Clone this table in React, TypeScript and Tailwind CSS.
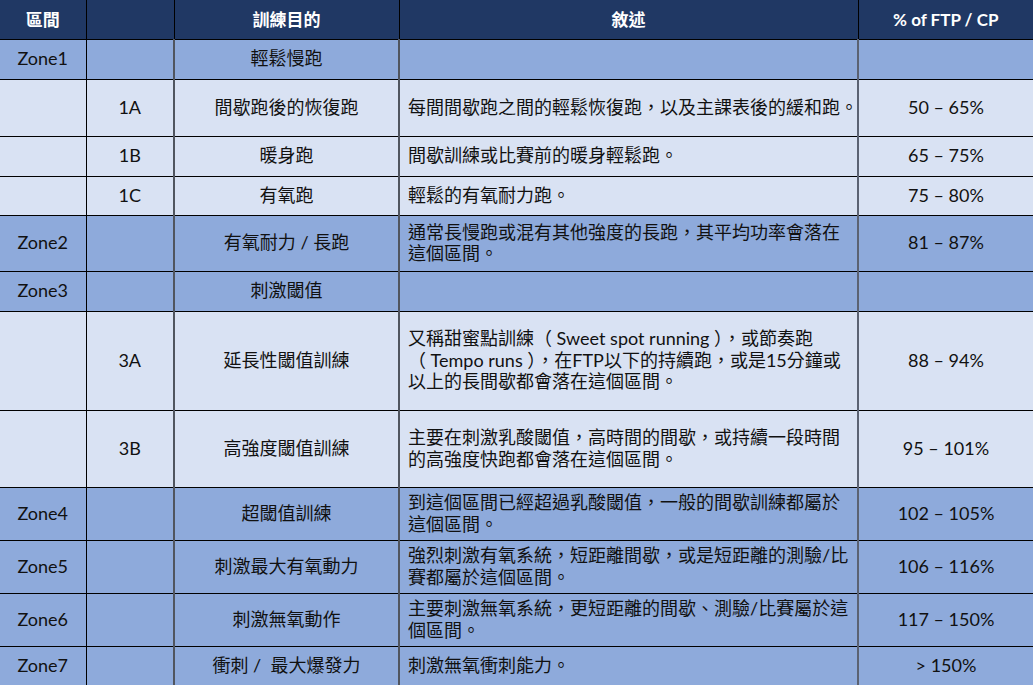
const font = { fontFamily: '"Lato", "Noto Sans CJK TC", sans-serif' };

type Row = {
  zone?: string;
  sub?: string;
  goal: string;
  desc: string[];
  pct: string;
  main: boolean;
  h: string;
};

const rows: Row[] = [
  { zone: "Zone1", goal: "輕鬆慢跑", desc: [], pct: "", main: true, h: "h-[40px]" },
  { sub: "1A", goal: "間歇跑後的恢復跑", desc: ["每間間歇跑之間的輕鬆恢復跑，以及主課表後的緩和跑。"], pct: "50 – 65%", main: false, h: "h-[57px]" },
  { sub: "1B", goal: "暖身跑", desc: ["間歇訓練或比賽前的暖身輕鬆跑。"], pct: "65 – 75%", main: false, h: "h-[40px]" },
  { sub: "1C", goal: "有氧跑", desc: ["輕鬆的有氧耐力跑。"], pct: "75 – 80%", main: false, h: "h-[39px]" },
  { zone: "Zone2", goal: "有氧耐力 / 長跑", desc: ["通常長慢跑或混有其他強度的長跑，其平均功率會落在", "這個區間。"], pct: "81 – 87%", main: true, h: "h-[56px]" },
  { zone: "Zone3", goal: "刺激閾值", desc: [], pct: "", main: true, h: "h-[40px]" },
  { sub: "3A", goal: "延長性閾值訓練", desc: ["又稱甜蜜點訓練（ Sweet spot running ），或節奏跑", "（ Tempo runs ），在FTP以下的持續跑，或是15分鐘或", "以上的長間歇都會落在這個區間。"], pct: "88 – 94%", main: false, h: "h-[99px]" },
  { sub: "3B", goal: "高強度閾值訓練", desc: ["主要在刺激乳酸閾值，高時間的間歇，或持續一段時間", "的高強度快跑都會落在這個區間。"], pct: "95 – 101%", main: false, h: "h-[77px]" },
  { zone: "Zone4", goal: "超閾值訓練", desc: ["到這個區間已經超過乳酸閾值，一般的間歇訓練都屬於", "這個區間。"], pct: "102 – 105%", main: true, h: "h-[53px]" },
  { zone: "Zone5", goal: "刺激最大有氧動力", desc: ["強烈刺激有氧系統，短距離間歇，或是短距離的測驗/比", "賽都屬於這個區間。"], pct: "106 – 116%", main: true, h: "h-[53px]" },
  { zone: "Zone6", goal: "刺激無氧動作", desc: ["主要刺激無氧系統，更短距離的間歇、測驗/比賽屬於這", "個區間。"], pct: "117 – 150%", main: true, h: "h-[53px]" },
  { zone: "Zone7", goal: "衝刺 /\u00a0\u00a0最大爆發力", desc: ["刺激無氧衝刺能力。"], pct: "> 150%", main: true, h: "h-[40px]" },
];

export default function App() {
  return (
    <div className="w-[1033px] h-[685px] overflow-hidden bg-white" style={font}>
      <table className="w-[1033px] table-fixed border-collapse text-[18px] leading-[21.5px] text-[#111]">
        <colgroup>
          <col className="w-[86px]" />
          <col className="w-[88px]" />
          <col className="w-[225px]" />
          <col className="w-[459px]" />
          <col className="w-[175px]" />
        </colgroup>
        <thead>
          <tr className="h-[39px] bg-[#203864] text-white font-bold text-[17px]">
            <th className="border-r border-b border-black font-bold">區間</th>
            <th className="border-r border-b border-black"></th>
            <th className="border-r border-b border-black font-bold">訓練目的</th>
            <th className="border-r border-b border-black font-bold">敘述</th>
            <th className="border-b border-black font-bold">% of FTP / CP</th>
          </tr>
        </thead>
        <tbody>
          {rows.map((r, i) => (
            <tr key={i} className={`${r.h} ${r.main ? "bg-[#8eaadb]" : "bg-[#d9e2f3]"}`}>
              <td className="border-r border-b border-black text-center align-middle">{r.zone}</td>
              <td className="border-r-2 border-r-[#50555f] border-b border-b-black text-center align-middle">{r.sub}</td>
              <td className="border-r-2 border-r-[#50555f] border-b border-b-black text-center align-middle whitespace-nowrap">{r.goal}</td>
              <td className="border-r-2 border-r-[#5b6272] border-b border-b-black px-[8px] align-middle whitespace-nowrap">
                {r.desc.map((line, j) => (
                  <div key={j}>{line}</div>
                ))}
              </td>
              <td className="border-b border-black text-center align-middle">{r.pct}</td>
            </tr>
          ))}
        </tbody>
      </table>
    </div>
  );
}
